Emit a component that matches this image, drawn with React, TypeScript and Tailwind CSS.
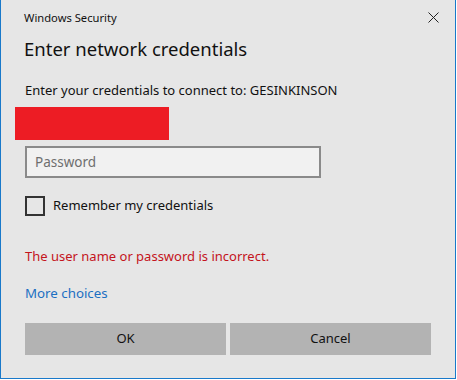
export default function App() {
  return (
    <div className="w-[457px] h-[380px] bg-white">
      <div
        className="w-[456px] h-[379px] bg-[#e6e6e6] border-l border-r border-b border-[#1979ca] flex flex-col text-[#000]"
        style={{ fontFamily: '"Noto Sans", "Open Sans", sans-serif' }}
      >
        {/* title bar */}
        <div className="h-[35px] flex items-center justify-between pl-[23px] pr-[16px]">
          <span className="text-[11.2px] leading-none text-[#111]">Windows Security</span>
          <svg width="11" height="11" viewBox="0 0 11 11">
            <path d="M0.5 0.5 L10.5 10.5 M10.5 0.5 L0.5 10.5" stroke="#222" strokeWidth="1" />
          </svg>
        </div>

        <h1 className="pl-[23px] text-[18.5px] leading-[28px] text-[#111]">
          Enter network credentials
        </h1>

        <p className="pl-[24px] mt-[17px] text-[13px] leading-[20px] text-[#111]">
          Enter your credentials to connect to: GESINKINSON
        </p>

        <div className="ml-[14px] mt-[7px] w-[154px] h-[33px] bg-[#ed1c24]" />

        <div className="ml-[24px] mt-[6px] w-[296px] h-[32px] border-2 border-[#8a8a8a] bg-[#f1f1f1] flex items-center pl-[8px]">
          <span className="text-[13.5px] text-[#6e6e6e]">Password</span>
        </div>

        <label className="ml-[24px] mt-[18px] flex items-center gap-[8px]">
          <span className="w-[20px] h-[20px] border-2 border-[#333] bg-transparent" />
          <span className="text-[13px] text-[#111]">Remember my credentials</span>
        </label>

        <p className="pl-[24px] mt-[30px] text-[13px] leading-[20px] text-[#c4141c]">
          The user name or password is incorrect.
        </p>

        <a className="pl-[24px] mt-[17px] text-[13.3px] leading-[20px] text-[#1b6fc2]">
          More choices
        </a>

        <div className="ml-[24px] mt-[20px] flex gap-[4px]">
          <button className="w-[201px] h-[32px] bg-[#b3b3b3] text-[13px] text-[#111]">OK</button>
          <button className="w-[201px] h-[32px] bg-[#b3b3b3] text-[13px] text-[#111]">Cancel</button>
        </div>
      </div>
    </div>
  )
}
